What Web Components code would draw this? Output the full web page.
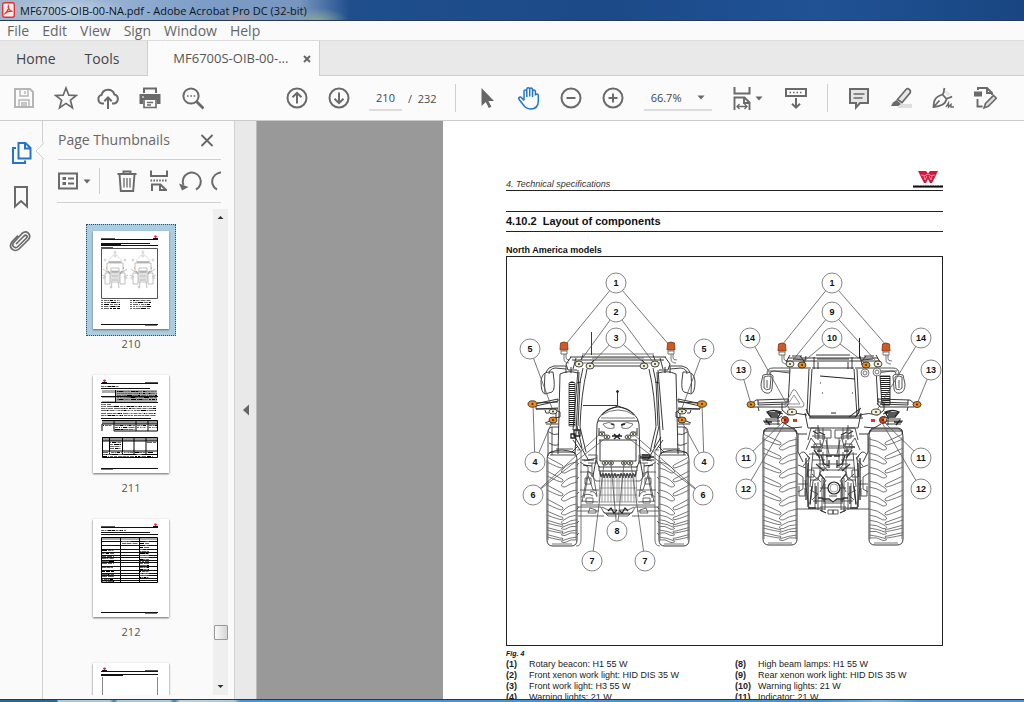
<!DOCTYPE html>
<html lang="en">
<head>
<meta charset="utf-8">
<title>MF6700S-OIB-00-NA.pdf - Adobe Acrobat Pro DC (32-bit)</title>
<style>
html, body { margin: 0; height: 100%; }
body { font-family: "Open Sans", "Noto Sans", sans-serif; font-size: 12px; color: #4b4b4b; overflow: hidden; }
</style>
</head>
<body>
<reader-app></reader-app>
<script>
const ICONS = {
  save: ['#b5b5b5', '<path d="M3 3h15l3 3v15H3z"/><path d="M8 3v7h8V3M7 21v-7h10v7M13 5v3M9 17h6M9 19h6" stroke-width="1.4"/>'],
  star: ['#6a6a6a', '<path d="M12 2l2.800 7.200 7.400.3-5.800 4.700 2 7.500L12 17.400l-6.400 4.300 2-7.500L1.800 9.500l7.400-.3z" stroke-width="1.700"/>'],
  cloud: ['#6a6a6a', '<path d="M8 17.500H6.200a4.400 4.400 0 0 1-.6-8.600 6.600 6.600 0 0 1 12.800-.4 4.600 4.600 0 0 1-.4 9H16"/><path d="M12 23V12M8.300 15.200L12 11.500l3.700 3.700"/>'],
  print: ['#6a6a6a', '<path d="M6 7V2.500h12V7"/><path d="M1.500 8h21v10h-3.500v-4H5v4H1.500z" fill="currentColor" stroke="none"/><path d="M6 14v7.500h12V14M9 16.500h6M9 19h4" stroke-width="1.600"/><path d="M4 11h2" stroke="#fff" stroke-width="1"/>'],
  search: ['#6a6a6a', '<circle cx="11" cy="10" r="7.600"/><path d="M16.500 15.500l7 7" stroke-width="2.800"/><path d="M7 10h1.600M10.300 10h1.600M13.600 10h1.600" stroke-width="1.600"/>'],
  up: ['#6a6a6a', '<circle cx="12" cy="12" r="9.500"/><path d="M12 17.500V7M7.500 11.300L12 6.800l4.500 4.500"/>'],
  down: ['#6a6a6a', '<circle cx="12" cy="12" r="9.500"/><path d="M12 6.500V17M7.500 12.700l4.500 4.500 4.500-4.500"/>'],
  pointer: ['#666', '<path d="M6.500 2v18l4.300-4 3 6 2.600-1.300-3-5.800H19z" fill="currentColor" stroke="none"/>'],
  hand: ['#2475c7', '<path d="M7 14V5.500c0-2 2.800-2 2.800 0V11M9.800 10V3.300c0-2 2.900-2 2.900 0V10.500M12.700 10V3.600c0-2 2.800-2 2.800 0V11M15.500 11V5.400c0-2 2.900-2 2.900 0V9.500c0-1.900 2.900-1.900 2.900 0V15c0 5-2.300 8-7.800 8-4 0-5.500-1.500-7.300-4.300L2 13.300c-1-2 1.400-3 2.800-1.300L7 14.500" stroke-width="1.500"/>'],
  minus: ['#6a6a6a', '<circle cx="12" cy="12" r="9.500"/><path d="M7.500 12h9"/>'],
  plus: ['#6a6a6a', '<circle cx="12" cy="12" r="9.500"/><path d="M7.500 12h9M12 7.500v9"/>'],
  fit: ['#6a6a6a', '<path d="M4.500 1v6.500h15V1"/><path d="M4.500 24V11.500h10l5 5V24M14 12v5h5" stroke-width="1.900"/><path d="M7 20.500h10M9.500 18l-2.500 2.500 2.500 2.500M14.500 18l2.500 2.500-2.500 2.500" stroke-width="1.300"/>'],
  keys: ['#6a6a6a', '<path d="M2 3h20v7H2z"/><path d="M5.500 6.500h1.500M9 6.500h1.500M12.500 6.500h1.500M16 6.500h1.500" stroke-width="1.600"/><path d="M12 12v9.500M8 17.700l4 4 4-4"/>'],
  note: ['#6a6a6a', '<path d="M3 3h18v14h-8l-4 4.500V17H3z" fill="#e6e6e6"/><path d="M6.500 8h11M6.500 12h9" stroke-width="1.500"/>'],
  marker: ['#6a6a6a', '<path d="M9 18h14v4H9z" fill="#dedede" stroke="none"/><path d="M8.500 13.500L17 3.500c2-2 5.500.5 4 3.500l-8 9.500z" fill="#e6e6e6" stroke-width="1.700"/><path d="M7.500 14l4.500 4-3 2H2l2-3.500z" fill="currentColor" stroke="none"/>'],
  pen: ['#6a6a6a', '<path d="M13 3l7 5-3 2-5-4z" fill="#e6e6e6" stroke="none"/><path d="M2.500 21c0-6 1-10 9-12.500l4 4.500c-1 6-6 7.500-13 8zM2.500 21l6-6.500M11.500 8.500c2-2 1-4 2-6.500M15.500 13c2-2 3.500-1 5.500-2.500" stroke-width="1.800"/><path d="M15 21l2.500-4v4l2.500-2.500v2.500h3" stroke-width="1.400"/>'],
  edit: ['#6a6a6a', '<path d="M5 4V2h9l5 5V9M14 2v5h5M4.500 13v7.500h5" stroke-width="1.900"/><path d="M1 5.500h8v5H1z" fill="currentColor" stroke="none"/><path d="M11 22l1.500-4.500 8-8 2.800 2.800-8 8z" fill="#ddd" stroke-width="1.600"/>'],
  pages: ['#2475c7', '<path d="M9.500 2h7l5 5v10.500h-12zM16 2v5.500h5.500"/><path d="M7 7H4v15h12v-2.500"/>'],
  bookmark: ['#6a6a6a', '<path d="M6 2h12v19.500l-6-5.500-6 5.500z"/>'],
  clip: ['#6a6a6a', '<path d="M8 15l8-8c2-1.800 4 .3 2.500 2L10 17.500c-3 3-7-1-4.300-4L14 4.500c4.500-4 10 1 6.500 6L11.500 19.500c-5 5-12-1-7.300-7L10 6.500" stroke-width="1.700" transform="translate(-1 0)"/>'],
  options: ['#6a6a6a', '<path d="M2 4.500h18v15H2z"/><path d="M5.500 9.500h3.500M5.500 14.500h3.500" stroke-width="3"/><path d="M11 9.500h6M11 14.500h6"/>'],
  trash: ['#6a6a6a', '<path d="M2.500 5h19M8.500 5V2.500h7V5M4.500 5l1.300 17h12.400L19.500 5" stroke-width="1.900"/><path d="M9 9v9.500M12 9v9.500M15 9v9.500" stroke-width="1.300"/>'],
  split: ['#6a6a6a', '<path d="M4 1.500V7h16V1.500M5 22v-6.500h8.500l5.500 5.500M13 16v5h7"/><path d="M3.500 11.500h17" stroke-dasharray="1.600 1.300"/>'],
  ccw: ['#6a6a6a', '<path d="M17 20.500A9 9 0 1 0 4.500 16"/><path d="M0 14.500l3 7 6.500-3.500z" fill="currentColor" stroke="none"/>'],
  cw: ['#6a6a6a', '<path d="M6 20.500A9 9 0 1 1 18.500 16"/>'],
  close: ['#666', '<path d="M6.500 7l11 11M17.500 7l-11 11" stroke-width="1.800"/>'],
  caret: ['#666', '<path d="M8.500 10.500h7L12 14.500z" fill="currentColor" stroke="none"/>'],
  back: ['#666', '<path d="M14 6.500v11L8 12z" fill="currentColor" stroke="none"/>']
};

function define(name, html) {
  customElements.define(name, class extends HTMLElement {
    connectedCallback() {
      if (this.shadowRoot) return;
      const root = this.attachShadow({ mode: 'open' });
      root.innerHTML = typeof html === 'function' ? html(this) : html;
    }
  });
}

define('ui-icon', el => {
  const [color, body] = ICONS[el.getAttribute('name')];
  return `<style>:host{display:inline-flex;flex:none;width:24px;height:24px}svg{width:100%;height:100%}</style>
  <svg viewBox="0 0 24 24" fill="none" stroke="currentColor" stroke-width="2" style="color:${color}" aria-hidden="true">${body}</svg>`;
});

define('tool-button', el => `<style>
:host{display:flex;flex:none;width:42px;height:36px}
button{all:unset;display:flex;flex:1;align-items:center;justify-content:center;cursor:pointer}
</style><button aria-label="${el.getAttribute('label')}"><ui-icon name="${el.getAttribute('icon')}"></ui-icon><slot></slot></button>`);

define('title-bar', `<style>
:host{display:flex;flex:none;align-items:center;gap:5px;height:20px;padding:0 2px;border-bottom:1px solid #243a58;color:#101418;font-size:11px;
background:radial-gradient(ellipse 24px 12px at 240px 20px,#b99b90aa,transparent),radial-gradient(ellipse 30px 12px at 318px 20px,#9db98faa,transparent),radial-gradient(ellipse 60px 12px at 70px 10px,#d4e0ea88,transparent),linear-gradient(90deg,#9fb5cc 0,#a6bdd8 60px,#7d9ec8 200px,#7795bf 300px,#1f4e8c 350px,#1c4a89 60%,#205294 80%,#194682)}
svg{width:13px;height:16px;flex:none}
span{white-space:nowrap}
</style><svg viewBox="0 0 13 16"><rect x=".7" y=".7" width="11.600" height="14.600" rx="2" fill="#f8ecec" stroke="#e3332c" stroke-width="1.400"/><path d="M3 11.500c2-1 4-5 3.300-7.500C5.500 6 8 9.500 10.500 9.300 8 8.500 4 10 3 11.500z" fill="none" stroke="#e3332c" stroke-width="1.300"/></svg><span>MF6700S-OIB-00-NA.pdf - Adobe Acrobat Pro DC (32-bit)</span>`);

define('menu-bar', `<style>
:host{display:block;flex:none;background:#fafafa;border-bottom:1px solid #dcdcdc}
nav{display:flex;gap:13px;height:19px;padding:0 7px;align-items:center}
button{all:unset;font-size:14px;line-height:19px;color:#666;cursor:pointer}
</style><nav aria-label="Menu"><button>File</button><button>Edit</button><button>View</button><button>Sign</button><button>Window</button><button>Help</button></nav>`);

define('tab-strip', `<style>
:host{display:flex;flex:none;height:35px;background:#e9e9e9;box-shadow:inset 0 -1px #d0d0d0}
button{all:unset;cursor:pointer;font-size:14px;line-height:35px;color:#444}
.home{padding:0 14px 0 16px}.tools{padding:0 28px 0 15px}
.doc{display:flex;align-items:center;gap:8px;padding:0 5px 0 25px;background:#fbfbfb;border:solid #cfcfcf;border-width:0 1px}
.doc .t{font-size:13px;color:#555;padding-right:4px}
.doc .x{line-height:0;width:14px;height:14px}
.x svg{width:14px;height:14px}
</style><button class="home">Home</button><button class="tools">Tools</button><div class="doc"><button class="t">MF6700S-OIB-00-...</button><button class="x" aria-label="Close tab"><svg viewBox="0 0 14 14" stroke="#666" stroke-width="2"><path d="M4 4l6 6M10 4l-6 6"/></svg></button></div>`);

define('tool-bar', `<style>
:host{display:flex;flex:none;align-items:center;height:44px;padding-left:3px;background:#fbfbfb;border-bottom:1px solid #cbcbcb;overflow:hidden}
.g{display:flex;align-items:center}
.nav{margin-left:63px}
input,select{font:inherit;font-size:11px;color:#444;border:0;border-bottom:2px solid #dcdcdc;background:none;padding:0;height:26px;box-sizing:border-box;border-radius:0;outline:0;appearance:none}
input{width:33px;text-align:center;margin-left:9px}
.n{font-size:11px;margin-left:6px;white-space:pre}
i{width:1px;height:28px;background:#cfcfcf;flex:none}
.a{margin-left:18px}.b{margin-left:10px}
.zoom{display:flex;position:relative;margin:0 17px 0 10px;height:26px}
select{width:68px;padding-left:7px}
.zoom ui-icon{position:absolute;right:-1px;top:0;pointer-events:none}
.fit{width:44px}
</style>
<div class="g"><tool-button label="Save" icon="save"></tool-button><tool-button label="Star" icon="star"></tool-button><tool-button label="Upload" icon="cloud"></tool-button><tool-button label="Print" icon="print"></tool-button><tool-button label="Find" icon="search"></tool-button></div>
<div class="g nav"><tool-button label="Previous page" icon="up"></tool-button><tool-button label="Next page" icon="down"></tool-button><input aria-label="Page number" value="210"><span class="n">/  232</span></div>
<i class="a"></i>
<div class="g b"><tool-button label="Select" icon="pointer"></tool-button><tool-button label="Hand" icon="hand"></tool-button><tool-button label="Zoom out" icon="minus"></tool-button><tool-button label="Zoom in" icon="plus"></tool-button><div class="zoom"><select aria-label="Zoom level"><option>66.7%</option></select><ui-icon name="caret"></ui-icon></div><tool-button class="fit" label="Fit" icon="fit"><ui-icon name="caret" style="margin-left:-7px"></ui-icon></tool-button><tool-button label="Show keyboard" icon="keys" style="margin-left:2px"></tool-button></div>
<i class="b"></i>
<div class="g b"><tool-button label="Comment" icon="note"></tool-button><tool-button label="Highlight" icon="marker"></tool-button><tool-button label="Sign" icon="pen"></tool-button><tool-button label="Edit" icon="edit"></tool-button></div>`);

define('nav-rail', `<style>
:host{display:flex;flex:none;flex-direction:column;gap:8px;width:42px;padding-top:14px;box-sizing:border-box;background:#fafafa;position:relative}
.notch{position:absolute;right:-2px;top:20px;width:9px;height:20px}
</style><tool-button label="Page Thumbnails" icon="pages"></tool-button><tool-button label="Bookmarks" icon="bookmark"></tool-button><tool-button label="Attachments" icon="clip"></tool-button>
<svg class="notch" viewBox="0 0 9 20"><path d="M8 1v18" stroke="#fafafa" stroke-width="2"/><path d="M8 1v2L1 10l7 7v2" fill="none" stroke="#cfcfcf"/></svg>`);

/* Miniature page art: head rule, brand mark and foot rule shared by every thumbnail. */
const bar = (x, y, w, h = 1, c = '#111') => `<rect x="${x}" y="${y}" width="${w}" height="${h}" fill="${c}"/>`;
const words = (x, y, w, rows, seed) => {
  let s = '', r = seed;
  for (let j = 0; j < rows; j++) {
    let p = x;
    while (p < x + w) { r = (r * 73 + 41) % 101; const l = 1 + r % 5; s += bar(p, y + j * 2, Math.min(l, x + w - p), 1, r % 3 ? '#666' : '#000'); p += l + (r % 2 ? 1 : 0.5); }
  }
  return s;
};
function head(odd) {
  return bar(8, 8, 57) + (odd ? bar(52, 7, 13, 1, '#555') + `<path d="M10.500 5h2l-1 2z" stroke="#e0243f" fill="#e0243f"/>` + bar(9, 7, 5)
    : bar(8, 7, 14, 1, '#555') + `<path d="M61.500 5h2l-1 2z" stroke="#e0243f" fill="#e0243f"/>` + bar(60, 7, 5)) + bar(8, 93, 57) + bar(odd ? 8 : 52, 94, 12, 1, '#777');
}
const mini = x => `<g transform="translate(${x} 0)" fill="none" stroke="#b0b0b0" stroke-width=".8">
<path d="M0 22l-7 8M0 22l7 8" stroke="#d4d4d4"/><path d="M-7 31h14M-8 32v9h16v-9zM-10 42h5v11h-5zM5 42h5v11H5zM-4 37h8v14h-8zM-4 40h8M-3 43h6M-3 47h6M-4 57l1-6M4 57l-1-6M-12 38l4 3M12 38l-4 3M-13 44l4 2M13 44l-4 2"/>
<g stroke="#c4c4c4"><circle cy="21" r="1"/><circle cy="25" r="1"/><circle cx="-10" cy="29" r="1"/><circle cx="10" cy="29" r="1"/><circle cx="-11" cy="47" r="1"/><circle cx="11" cy="47" r="1"/><circle cx="-4" cy="56" r="1"/></g><path d="M-3 41h6M-3 45h6M-3 49h6M-6 31h12M-7 40l2 3M7 40l-2 3" stroke="#888"/><path d="M-9 37h1M8 37h1" stroke="#e2a05c" stroke-width="1.300"/></g>`;
const THUMBS = {
  210: () => head(0) + bar(8, 12, 49) + bar(8, 13, 20) + bar(8, 14, 57) + bar(8, 16, 12, 1, '#555') + '<path d="M8.500 17.500h56v50h-56z" fill="none" stroke="#555"/>' + mini(22) + mini(50) + words(8, 69, 2, 5, 7) + words(11, 69, 16, 5, 5) + words(37, 69, 2, 5, 7) + words(40, 69, 18, 5, 11),
  211: () => head(1) + words(8, 11, 18, 1, 9) + bar(8, 13, 49) + bar(9, 15, 55, 12, '#aaa') + bar(9, 18, 13, 3, '#fff') + bar(9, 23, 13, 3, '#fff') + bar(22, 15, 1, 12) + words(24, 16, 40, 5, 4) + bar(8, 21, 57) + bar(8, 27, 57) + words(8, 29, 10, 1, 17) + words(8, 31, 55, 3, 17) + words(8, 38, 55, 2, 8) + bar(8, 43, 50)
    + bar(9, 45, 56, 4, '#999') + '<path d="M9 45.500h55.500V56H21V45M9 49h55M43 45v11M55 45v11M9 56v-7" fill="none" stroke="#000"/>' + words(22, 50, 20, 3, 3) + words(10, 50, 9, 1, 6) + words(44, 50, 9, 2, 5) + words(56, 50, 8, 2, 5)
    + bar(9, 62, 55, 4, '#999') + '<path d="M9.500 62.500h55v20h-55zM9 66h55M9 76h55M9 79.500h55M16.500 62v18M29.500 62v18M41 62v18M53 62v18" fill="none" stroke="#000"/>' + words(17, 67, 11, 4, 15) + words(54, 67, 9, 1, 8) + words(10, 77, 50, 3, 21),
  212: () => head(0) + words(8, 11, 25, 1, 9) + bar(8, 13, 49) + bar(8, 15, 57) + bar(9, 19, 56, 2, '#aaa') + '<path d="M8.500 18.500h56v45h-56zM27.500 18v45.500h19V18" fill="none" stroke="#000"/>' + [22, 26, 30, 33, 36, 38, 41, 43, 47, 51, 54, 56, 59, 61].map((y, i) => bar(8, y, 56) + (i > 1 ? words(9, y + 1, 12, 1, y) : '')).join('') + words(47, 22, 9, 19, 13) + words(29, 22, 16, 2, 10),
  213: () => head(1) + bar(8, 11, 57) + bar(8, 12, 22) + '<path d="M9.500 14v80M64.500 14v80" stroke="#888"/>'
};
define('page-thumb', el => `<style>
:host{display:flex;flex-direction:column;align-items:center;height:144px}
button{all:unset;box-sizing:border-box;width:90px;height:112px;padding:6px;border:1px solid transparent;cursor:pointer}
:host([selected]) button{background:#abcde2;border:1px dotted #445}
svg{display:block;width:76px;height:98px;background:#fff;box-shadow:0 1px 2px #666}
span{font-size:11px;line-height:16px;color:#555}
</style><button aria-label="Page ${el.getAttribute('page')}"><svg viewBox="0 0 76 98">${THUMBS[el.getAttribute('page')]()}</svg></button><span>${el.getAttribute('page')}</span>`);

define('thumbs-panel', `<style>
:host{display:flex;flex:none;flex-direction:column;box-sizing:border-box;width:193px;border:solid #cfcfcf;border-width:0 1px;background:#fafafa;min-height:0;padding-bottom:4px}
header{display:flex;justify-content:space-between;align-items:center;height:38px;margin:0 13px 0 15px;border-bottom:1px solid #cfcfcf}
h2{margin:0;font-size:14px;font-weight:400;line-height:38px;color:#666}
.x{all:unset;line-height:0;padding-right:2px}
.tools{display:flex;align-items:center;height:42px;margin:0 13px 0 14px;border-bottom:1px solid #cfcfcf;overflow:hidden}
.tools tool-button{width:32px}.tools .o{width:36px}.tools i{width:1px;height:26px;background:#cfcfcf;margin:0 11px 0 6px;flex:none}
.body{display:flex;flex:1;min-height:0;margin-top:6px}
.list{flex:1;overflow:hidden;padding:15px 0 0 6px}
.bar{display:flex;flex-direction:column;align-items:center;width:15px;margin-right:6px;background:#efefef;padding:5px 0;box-sizing:border-box}
.thumb{box-sizing:border-box;width:14px;height:15px;border:1px solid #999;border-radius:1px;background:linear-gradient(90deg,#fafafa,#d5d5d8)}
.bar svg{width:7px;height:6px}.s{flex:400}.t{flex:43}
</style><header><h2>Page Thumbnails</h2><button class="x" aria-label="Close panel"><ui-icon name="close"></ui-icon></button></header>
<div class="tools"><tool-button class="o" label="Options" icon="options"><ui-icon name="caret" style="margin-left:-6px"></ui-icon></tool-button><i></i><tool-button label="Delete" icon="trash"></tool-button><tool-button label="Split" icon="split"></tool-button><tool-button label="Rotate left" icon="ccw"></tool-button><tool-button label="Rotate right" icon="cw"></tool-button></div>
<div class="body"><div class="list"><page-thumb page="210" selected></page-thumb><page-thumb page="211"></page-thumb><page-thumb page="212"></page-thumb><page-thumb page="213"></page-thumb></div>
<div class="bar"><svg viewBox="0 0 7 6"><path d="M.5 5h6L3.500 2z" fill="#333"/></svg><div class="s"></div><div class="thumb"></div><div class="t"></div><svg viewBox="0 0 7 6"><path d="M.5 1h6L3.500 4z" fill="#333"/></svg></div></div>`);

define('panel-splitter', `<style>
:host{display:flex;flex:none;width:22px;background:#e9e9e9;box-sizing:border-box;border-right:1px solid #bbb}
button{all:unset;display:flex;flex:1;align-items:center;justify-content:center;cursor:pointer}
</style><button aria-label="Collapse panel"><ui-icon name="back"></ui-icon></button>`);

/* The drawing: both machines are built from a left half that is mirrored. */
const oval = (x, y, c, rx = 4, ry = 3) => `<ellipse cx="${x}" cy="${y}" rx="${rx}" ry="${ry}" fill="${c}" stroke="#333" stroke-width=".9"/><circle cx="${x}" cy="${y}" r=".9" fill="#222" stroke="none"/>`;
const line = (d, w = .8, c = '#222') => `<path d="${d}" stroke-width="${w}" stroke="${c}"/>`;
/* Chevron lugs; they crowd together towards the foot of the tyre, where it curves away. */
function treads(x0, x1, y0, y1) {
  let d = '', step = 14, m = (x0 + x1) / 2;
  for (let y = y0; y < y1 - 8; y += step) {
    const a = m - x0, k = step / 14;
    d += `M${x0} ${y}q${a - 3} ${6 * k} ${a} ${6 * k}q3-2-2-${4 * k}L${x0} ${y - 5 * k}M${x1} ${y}q-9 1-${a - 1} ${7 * k}q-4 ${4 * k} 2 ${4 * k}q6-4 ${a - 3}-${5 * k}`;
    if (y > y1 - 45) step = Math.max(7, step - 3);
  }
  return d;
}
const tyre = (x0, x1, y0, y1) => `<path fill="#fff" d="M${x0 + 4} ${y0}H${x1 - 4}q4 1 4 9V${y1 - 6}q0 6-6 6H${x0 + 6}q-6 0-6-6V${y0 + 9}q0-8 4-9z"/>` + line(treads(x0, x1, y0 + 10, y1), .8, '#555') + line(`M${x0 + 1} ${y0 + 8}V${y1 - 6}M${x1 - 1} ${y0 + 8}V${y1 - 6}M${x0 + 5} ${y1 - 2}H${x1 - 5}`, 1, '#777');
const beacon = (x, y) => `<path d="M${x - 3.500} ${y - 5}q3.500-2 7 0l.5 7h-8z" fill="#cf5a24" stroke="#7a3213" stroke-width=".8"/>` + line(`M${x - 3} ${y + 3}h6v3h-6zM${x} ${y + 6}v5q0 4 5 4M${x + 2} ${y + 6}v4q0 2 4 2`, .8, '#555');

const frontHalf = line('M577 450h4V540q0 6-5 6M579 463l-3 3M579 477l-3 3M579 492l-3 3M579 507l-3 3M579 521l-3 3M579 533l-3 3', .9, '#666') + tyre(547, 577, 452, 546)
  + line('M548 456V432q0-5 5-5h6M552 427v28M549 432q5 4 9 2M549 443q7 4 10 1M549 453q12-6 26 0M550 455h26M556 449h17', .8)
  + line('M549 372q-7 0-8 9 0 12 4 13l7-2q3-2 2-12l-1-8z M545 373q-1 10 0 20M546 372q2-5 8-6h12M549 374q0-5 6-6l11 1', 1, '#444')
  + line('M560 374q8-4 18-1M560 374l-2 80M579 372l-4 82M578 370l-5 60M566 373v-7M571 373v-6M573 440l7 10M575 437l14 24M578 446l-6 6', .9)
  + line('M570 357h48M572 360h46M588 366h30M571 357l-5 7 2 6h9M576 358l-3 11M583 355l-2 5M594 360l-6 6M583 368l-3 14-2 44M587 369q-6 26-7 58l6 25M581 382l-4 1M577 426l5 22', .9)
  + line('M582 354h36M592 358h26M576 363h42', .9, '#666')
  + line('M534 404l24-5v2l-22 5v3h22M536 409l22-1M537 403l21-1M545 410l1 3h3M549 411l4-2 7 3v5l-10 2M546 424h12M545 423l5-2M556 411v9', .9)
  + line('M597 424q1-12 21-18M602 415q4-7 16-8M598 421h20M597 424l-1 36 3 7h19M599 428v8M599 440h19M600 440v21h18M596 460l-3 16M599 466v5h19M600 471v4h18', .9)
  + line('M602 415q7-5 16-5M603 424q6-3 11 0v4q-8 2-11-4zM601 418h17M599 432h6M599 434h6', .8, '#555')
  + line('M600 475l-1 27h19M602 474v28M605 474v28M608 474v28M611 474v28M614 474v28M617 474v28M599 481h19M599 488h19M599 495h19', .7, '#777')
  + line('M600 472l1 5 2-4 1 5 2-5 1 5 2-5 1 5 2-5 1 5 2-5 1 5 2-4', .8)
  + line('M580 462l8 5v8l5 15h6M580 472h9l7 9h4M581 501l17 1M577 507h24l3 6h14M577 511h22M582 502l6-31 5 3 4 22M584 498l4-22M590 492q5-2 7 5M592 463v14M580 490h16M585 478h6v6h-6zM586 498h7v5h-7zM590 508l6 2v3h-8zM602 507l6 3h9M603 511l5 5h9M596 505h22M588 455h9v8h-9M584 461l13-3M593 496q-6-4-12 1M581 505h15M578 516h26', .9, '#555')
  + line('M608 511l3-3 3 5 3-3M606 514h12M582 460h12M583 465l9 1', 1.200);

const rearHalf = tyre(763, 797, 429, 545)
  + line('M764 434q-2-5 4-6h26l4 6v18l5 10M764 431h33M798 434h9', .9)
  + line('M763 375q9-2 10 1l-1 13q-1 5-6 4-5-1-5-9zM764 377q6-2 7 0l-1 12q-4 2-6-1zM767 380v8M767 374q0-6 6-6h17M770 374q0-3 4-3l16 2M769 371h21', 1, '#555')
  + line('M790 369l-2 36M809 369l-2 44 4 4M812 369l-3 47M788 358h45M786 361h47M790 355l-4 7M792 356h10M793 359l12 1M816 355h17M817 359h16M818 362v7M812 368h21M789 368h22M814 357v12M800 356l4 5M806 356l-2 9', .9)
  + line('M751 404l5-4 32-1v3l-30 1M752 407h34l3-4M758 405l28-1M758 400v5M782 403v7l6 5M758 407l1 4M775 411l8 3M765 419h12l5-3M765 424h15M763 421h17M778 417v8M785 424l7 4 10-1M788 415q9-3 19 0M806 409l4 8h23M805 413l3 15h25', .9)
  + line('M767 412q6-3 14 0l-3 5h-7zM768 413h12M770 415h8M764 422h8M766 420l4 5', 1.300)
  + line('M799 455q5-8 10 4l-2 18M798 465l8 3M797 473l6 4v12l-5 3M798 484h10M799 486v10h6v-8M797 509h28M804 452l6 6-7 8M809 454h9l2 6v16l-7 5-3 24M813 452l-3 35M810 480h8l2-8 6-4M813 501h18M815 483v24M818 482v28M822 478v34M825 484v26M805 480l4 28h13M812 474l9 8M811 468h14M808 440l3-12h8v10M806 450l5-12 6 8M815 430h16v8h-16zM818 425v15M823 428v12M812 436h13l-3 10h11M820 440q0 8 4 8h9M819 448v7h14M823 452v13l5 6M827 438v30M816 455h17M812 460h13M818 464h15M822 470h11M825 477h8M820 488h8M823 503h10M820 507h13M828 510h5v4h-5zM808 470h6v7h-6zM826 480l-6 12M829 496h4M826 440l3 14M810 490l8 4-6 6M814 444h8v5h-8z', .9, '#444')
  + line('M806 458v42M808 463v44M812 486l-2 18M816 486v18M824 480v22M814 450l6 8M816 464l8 7M821 455l3 9 5 2M813 431l5 3M819 432l6 3M808 508h8M820 510l6 3M811 447h10M826 456h6M822 499h7l4 3M820 474l5 6M829 460v8M818 498h5M817 451h5', 1.300, '#333');

const ball = (n, x, y) => `<circle cx="${x}" cy="${y}" r="10" fill="#fff" stroke="#777" stroke-width=".9"/><text x="${x}" y="${y + 3}">${n}</text>`;
const BALLS = [[1,616,283],[2,616,312],[3,616,338],[5,530,349],[5,704,349],[4,535,462],[4,704,462],[6,533,495],[6,703,495],[8,617,531],[7,592,561],[7,645,561],
  [1,832,283],[9,832,312],[10,832,338],[14,750,338],[14,921,338],[13,741,370],[13,931,370],[11,746,458],[11,921,458],[12,746,489],[12,921,489]];
const LEADERS = 'M616 283L566 344M616 283L670 346M616 312L581 360M616 312L653 362M616 338L592 363M616 338L644 363M530 349L552 408M704 349L682 408M535 462L533 405M535 462L552 422M704 462L702 405M704 462L682 422M533 495L600 434M533 495L607 437M703 495L633 434M703 495L627 437M617 531L611 464M617 531L624 464M592 561L604 464M645 561L631 464'
  + 'M832 283L782 345M832 283L886 345M832 312L793 360M832 312L875 360M832 338L803 362M832 338L864 362M750 338L790 410M921 338L877 410M741 370L751 404M931 370L917 404M746 458L784 421M921 458L883 421M746 489L786 421M921 489L881 421';

define('machine-figure', `<style>
:host{display:block;border:1px solid #222;background:#fff}
svg{display:block;width:100%;height:auto}
text{font:bold 9px "Liberation Sans",Arial,sans-serif;fill:#111;stroke:none;text-anchor:middle}
</style><svg viewBox="507 257 435 388" fill="none" stroke="#222" stroke-width=".9" role="img" aria-label="Layout of components">
<defs><pattern id="mesh" width="2" height="2" patternUnits="userSpaceOnUse"><path d="M0 0h2v1H0z" fill="#222" stroke="none"/></pattern></defs>
<g>${frontHalf}</g><g transform="translate(1236 0) scale(-1 1)">${frontHalf}</g>
<path d="M569 383q3-3 6 0v43h-6z" fill="url(#mesh)" stroke-width=".7"/>
${line('M591.500 332v23M617.500 391v15M583 405.500h34', .9)}<circle cx="617.500" cy="391.500" r="1" fill="#222"/>
${line('M614 434l6 5M620 434l-6 5M612 436h10M611 424l3 1M621 425l4-1M642 455h8v3h-8M640 457h14M571 434h4v4h-4zM574 430h6v6h-6z', 1.300)}
<g>${rearHalf}</g><g transform="translate(1666 0) scale(-1 1)">${rearHalf}</g>
${line('M820 376l35 3M810 416h52M809 418h54M861 408l-12 9M859.500 338v20M822 393h1M852 393h1M820 383h1M831 413h5', 1)}
<path d="M793 390q2-1 3 1l8 13q0 3-2 3h-15q-3-1-2-3z" stroke="#777"/><path d="M794 395l6 9h-12z" stroke="#888"/>
<path d="M880 376h10v29h-8z" fill="url(#mesh)"/><g fill="#fff" stroke="#666"><circle cx="865" cy="373" r="4"/><circle cx="865" cy="373" r="2"/><circle cx="877" cy="372" r="4"/><circle cx="877" cy="372" r="2"/></g>
<circle cx="834" cy="488" r="6" fill="#fff" stroke-width="1.200"/><circle cx="834" cy="488" r="4" stroke="#999"/>
${line(LEADERS, .8, '#555')}
${beacon(564, 348)}${beacon(671, 348)}${beacon(782, 349)}${beacon(886, 349)}
${oval(602, 434, '#f3efcf', 3, 2)}${oval(607, 437, '#f3efcf', 3, 2)}${oval(628, 437, '#f3efcf', 3, 2)}${oval(633, 434, '#f3efcf', 3, 2)}
${oval(605, 463, '#f3efcf', 3, 2)}${oval(611, 463, '#f3efcf', 2.500, 2)}${oval(624, 463, '#f3efcf', 2.500, 2)}${oval(630, 463, '#f3efcf', 3, 2)}
${oval(579, 364, '#f3efcf')}${oval(590, 366, '#f3efcf')}${oval(644, 366, '#f3efcf')}${oval(655, 364, '#f3efcf')}
${oval(532.500, 404, '#ef8a17', 4.500, 3.200)}${oval(702, 404, '#ef8a17', 4.500, 3.200)}${oval(553, 420, '#ef8a17')}${oval(682, 420, '#ef8a17')}${oval(553, 411.500, '#f3efcf', 4, 2.500)}${oval(682, 411.500, '#f3efcf', 4, 2.500)}
${oval(790, 364, '#f3efcf')}${oval(802, 365, '#ef8a17')}${oval(866, 365, '#ef8a17')}${oval(878, 364, '#f3efcf')}${oval(751, 404.500, '#ef8a17')}${oval(917, 404.500, '#ef8a17')}
${oval(792, 412, '#f3efcf', 4.500, 3)}${oval(876, 412, '#f3efcf', 4.500, 3)}${oval(785, 420, '#d83a1e', 3.500, 3.500)}${oval(883, 420, '#d83a1e', 3.500, 3.500)}
<path d="M793 419h4v3h-4zM871 419h4v3h-4z" fill="#e0332a" stroke="none"/><path d="M782 419h2v3h-2zM884 418h2v3h-2z" fill="#e8b23a" stroke="none"/>
${BALLS.map(b => ball(...b)).join('')}
</svg>`);

define('manual-page', `<style>
:host{display:block;box-sizing:border-box;flex:1;min-width:0;background:#fff;color:#111;padding:48px 81px 0 63px;font-family:"Liberation Sans",Arial,sans-serif;font-size:9px;line-height:11px}
header{display:flex;justify-content:space-between;align-items:flex-end;height:21px;border-bottom:1px solid #222}
header em{color:#333;line-height:12px}
.logo{width:30px;height:18px;margin-bottom:2px}
h1{margin:20px 0 0;border:solid #222;border-width:1px 0;font-size:11px;line-height:19px;white-space:pre}
h2{margin:12px 0 0;font-size:9px;line-height:12px}
.cap{margin:3px 0 0;font-size:7px;line-height:10px;font-style:italic;font-weight:bold}
.key{display:grid;grid-template-columns:229px 1fr;color:#222}
dl{margin:0;display:grid;grid-template-columns:23px 1fr;white-space:nowrap}
dt{font-weight:bold}dd{margin:0}
</style><header><em>4. Technical specifications</em><svg class="logo" viewBox="0 0 30 18"><path d="M5 1h8l2 2.500L17 1h8l-2 4h-3l-3 0-2 0-2 0-3 0H7z" fill="#d4143c"/><path d="M7 5h16l-4 8-2 0-2-4-2 4h-2z" fill="#d4143c"/><path d="M8 5l4 .5 3-1.500 3 1.500 4-.5M11 6l1 4 2-4M19 6l-1 4-2-4" stroke="#f8c4cf" stroke-width=".7" fill="none"/><path d="M0 16.500h30" stroke="#111" stroke-width="2.200"/><path d="M1 15.500h28" stroke="#aaa" stroke-width=".8" stroke-dasharray="1 1.500"/></svg></header>
<h1>4.10.2  Layout of components</h1><h2>North America models</h2>
<machine-figure></machine-figure>
<p class="cap">Fig. 4</p>
<div class="key"><dl><dt>(1)</dt><dd>Rotary beacon: H1 55 W</dd><dt>(2)</dt><dd>Front xenon work light: HID DIS 35 W</dd><dt>(3)</dt><dd>Front work light: H3 55 W</dd><dt>(4)</dt><dd>Warning lights: 21 W</dd></dl>
<dl><dt>(8)</dt><dd>High beam lamps: H1 55 W</dd><dt>(9)</dt><dd>Rear xenon work light: HID DIS 35 W</dd><dt>(10)</dt><dd>Warning lights: 21 W</dd><dt>(11)</dt><dd>Indicator: 21 W</dd></dl></div>`);

define('reader-app', `<style>
:host{display:flex;flex-direction:column;height:100vh;overflow:hidden;background:#fafafa}
main{display:flex;flex:1;min-height:0}
.view{display:flex;flex:1;min-width:0;overflow:hidden;background:#999;padding-left:186px}
footer{flex:none;height:2px;border-top:1px solid #26384c;background:linear-gradient(90deg,#2c6796 0,#2c6796 57px,#a5cbe0 58px,#a5cbe0 110px,#3a7ba8 114px,#a5cbe0 118px,#a5cbe0 170px,#3a7ba8 174px,#b7d6e8 180px,#a5cbe0 234px,#4a95cd 240px,#4a95cd 80%,#7fb8e0 86%,#4a95cd 90%)}
</style><title-bar></title-bar><menu-bar></menu-bar><tab-strip></tab-strip><tool-bar></tool-bar>
<main><nav-rail></nav-rail><thumbs-panel></thumbs-panel><panel-splitter></panel-splitter><div class="view"><manual-page></manual-page></div></main><footer></footer>`);
</script>
</body>
</html>
